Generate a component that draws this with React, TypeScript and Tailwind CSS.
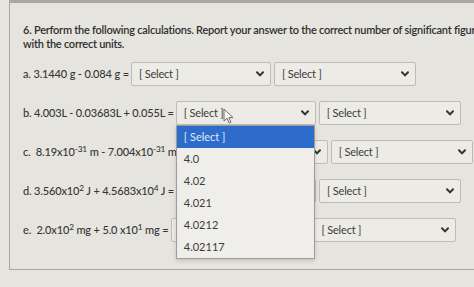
import React from 'react'

const font = { fontFamily: 'Lato, "Open Sans", "Liberation Sans", sans-serif' }

function Chevron() {
  return (
    <svg width="8" height="6" viewBox="0 0 8 6" className="shrink-0">
      <path d="M1 1.2 L4 4.4 L7 1.2" fill="none" stroke="#333333" strokeWidth="2" strokeLinecap="round" strokeLinejoin="round" />
    </svg>
  )
}

function SelectBox({ w = 'w-[140px]' }: { w?: string }) {
  return (
    <div
      className={`${w} h-6 shrink-0 flex items-center justify-between pl-[7px] pr-[6px] rounded-[2px] border border-[#bdbcb6] bg-[#ecebe6] text-[11px] tracking-[-0.2px] text-[#3c3c3c]`}
    >
      <span>[ Select ]</span>
      <Chevron />
    </div>
  )
}

const options = ['4.0', '4.02', '4.021', '4.0212', '4.02117']

function Row({ label, children }: { label: React.ReactNode; children?: React.ReactNode }) {
  return (
    <div className="flex items-center h-6">
      <span className="whitespace-nowrap text-[11px] tracking-[-0.15px] font-medium text-[#363636] mr-[2px]">{label}</span>
      {children ?? <SelectBox />}
      <div className="ml-[3px]">
        <SelectBox w="w-[142px]" />
      </div>
    </div>
  )
}

export default function App() {
  return (
    <div className="relative w-[474px] h-[287px] overflow-hidden bg-[#e6e4de]" style={font}>
      <div className="ml-[9px] w-[520px] border-t-[3px] border-l border-b border-[#a8a7a2] pl-[13px] pt-[20px] pb-[27px]">
        <p className="whitespace-nowrap text-[11px] leading-[14px] tracking-[-0.25px] font-semibold text-[#2f2f2f]">
          6. Perform the following calculations. Report your answer to the correct number of significant figures
          <br />
          with the correct units.
        </p>

        <div className="mt-[11px] flex flex-col gap-[15px]">
          <Row label={<>a. 3.1440 g - 0.084 g =</>} />
          <Row label={<>b. 4.003L - 0.03683L + 0.055L =</>}>
            <div className="relative shrink-0">
              <SelectBox />
              <div className="absolute left-0 top-full w-[139px] z-10 border border-[#9c9c9a] bg-[#efeeea] shadow-[0_2px_4px_rgba(0,0,0,0.15)] text-[11px]">
                <div className="h-[22px] flex items-center pl-[7px] bg-[#2e6ccb] text-[#dfe9fb]">[ Select ]</div>
                {options.map((o) => (
                  <div key={o} className="h-[22px] flex items-center pl-[7px] text-[#3c3c3c]">
                    {o}
                  </div>
                ))}
              </div>
              <svg className="absolute left-[47px] top-[7px] z-20" width="11" height="16" viewBox="0 0 11 16">
                <path d="M1 1 L1 13 L4 10.2 L6.2 15 L8 14.2 L5.9 9.6 L10 9.6 Z" fill="#f4f4f2" stroke="#6a6a6a" strokeWidth="1" strokeLinejoin="round" />
              </svg>
            </div>
          </Row>
          <Row
            label={
              <>
                c.&nbsp; 8.19x10<sup>-31</sup> m - 7.004x10<sup>-31</sup> m =
              </>
            }
          />
          <Row
            label={
              <>
                d. 3.560x10<sup>2</sup> J + 4.5683x10<sup>4</sup> J =
              </>
            }
          />
          <Row
            label={
              <>
                e.&nbsp; 2.0x10<sup>2</sup> mg + 5.0 x10<sup>1</sup> mg =
              </>
            }
          />
        </div>
      </div>
    </div>
  )
}
